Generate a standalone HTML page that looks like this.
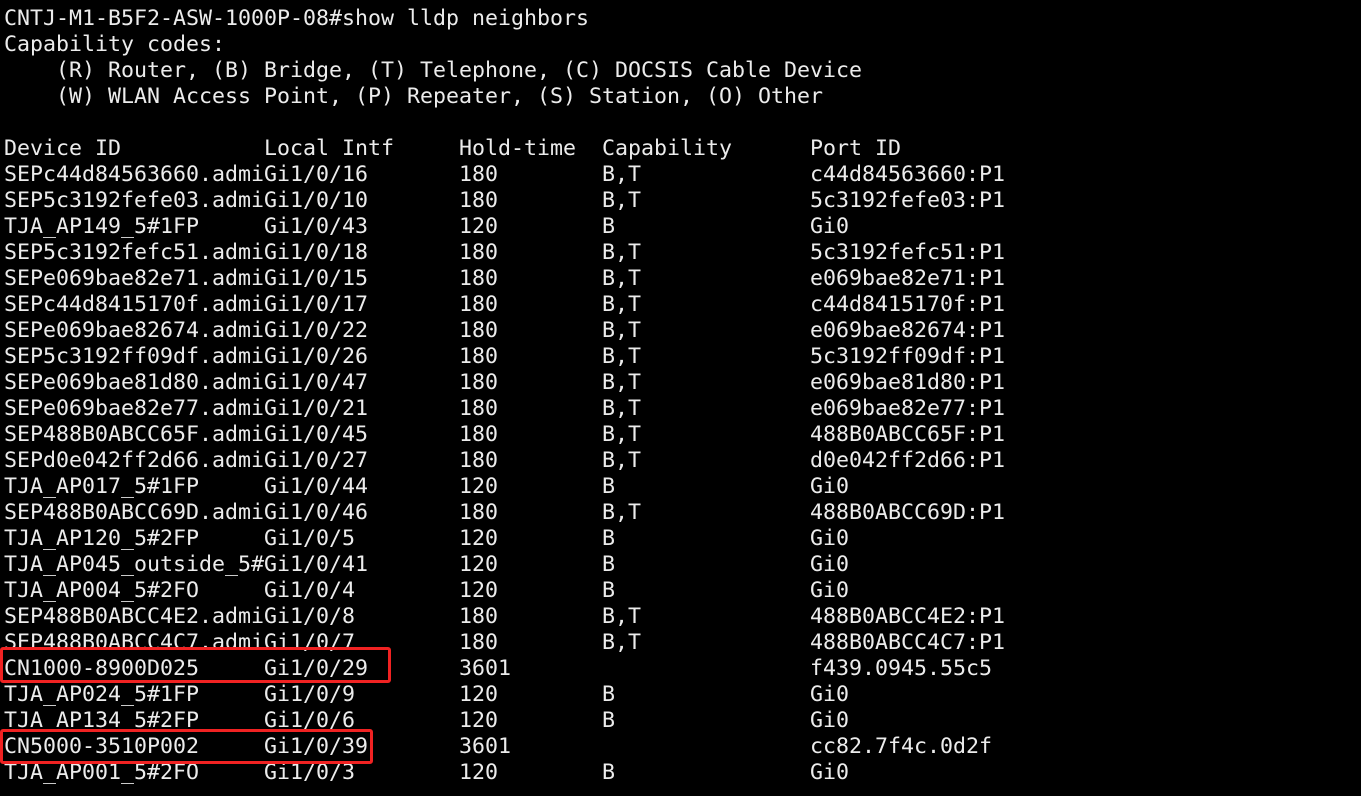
<!DOCTYPE html>
<html><head><meta charset="utf-8"><style>
html,body{margin:0;padding:0;background:#000;width:1361px;height:796px;overflow:hidden}
pre{margin:0;position:absolute;left:4px;top:6px;font-family:"DejaVu Sans Mono","Liberation Mono",monospace;font-size:21.6px;line-height:26px;color:#ececec;letter-spacing:0}
.b{position:absolute;border:3px solid #f02222;border-radius:3px;box-sizing:border-box}
</style></head><body>
<pre>CNTJ-M1-B5F2-ASW-1000P-08#show lldp neighbors
Capability codes:
    (R) Router, (B) Bridge, (T) Telephone, (C) DOCSIS Cable Device
    (W) WLAN Access Point, (P) Repeater, (S) Station, (O) Other

Device ID           Local Intf     Hold-time  Capability      Port ID
SEPc44d84563660.admiGi1/0/16       180        B,T             c44d84563660:P1
SEP5c3192fefe03.admiGi1/0/10       180        B,T             5c3192fefe03:P1
TJA_AP149_5#1FP     Gi1/0/43       120        B               Gi0
SEP5c3192fefc51.admiGi1/0/18       180        B,T             5c3192fefc51:P1
SEPe069bae82e71.admiGi1/0/15       180        B,T             e069bae82e71:P1
SEPc44d8415170f.admiGi1/0/17       180        B,T             c44d8415170f:P1
SEPe069bae82674.admiGi1/0/22       180        B,T             e069bae82674:P1
SEP5c3192ff09df.admiGi1/0/26       180        B,T             5c3192ff09df:P1
SEPe069bae81d80.admiGi1/0/47       180        B,T             e069bae81d80:P1
SEPe069bae82e77.admiGi1/0/21       180        B,T             e069bae82e77:P1
SEP488B0ABCC65F.admiGi1/0/45       180        B,T             488B0ABCC65F:P1
SEPd0e042ff2d66.admiGi1/0/27       180        B,T             d0e042ff2d66:P1
TJA_AP017_5#1FP     Gi1/0/44       120        B               Gi0
SEP488B0ABCC69D.admiGi1/0/46       180        B,T             488B0ABCC69D:P1
TJA_AP120_5#2FP     Gi1/0/5        120        B               Gi0
TJA_AP045_outside_5#Gi1/0/41       120        B               Gi0
TJA_AP004_5#2FO     Gi1/0/4        120        B               Gi0
SEP488B0ABCC4E2.admiGi1/0/8        180        B,T             488B0ABCC4E2:P1
SEP488B0ABCC4C7.admiGi1/0/7        180        B,T             488B0ABCC4C7:P1
CN1000-8900D025     Gi1/0/29       3601                       f439.0945.55c5
TJA_AP024_5#1FP     Gi1/0/9        120        B               Gi0
TJA_AP134_5#2FP     Gi1/0/6        120        B               Gi0
CN5000-3510P002     Gi1/0/39       3601                       cc82.7f4c.0d2f
TJA_AP001_5#2FO     Gi1/0/3        120        B               Gi0</pre>
<div class="b" style="left:0;top:647px;width:391px;height:36px"></div>
<div class="b" style="left:0;top:729px;width:373px;height:35px"></div>
</body></html>
